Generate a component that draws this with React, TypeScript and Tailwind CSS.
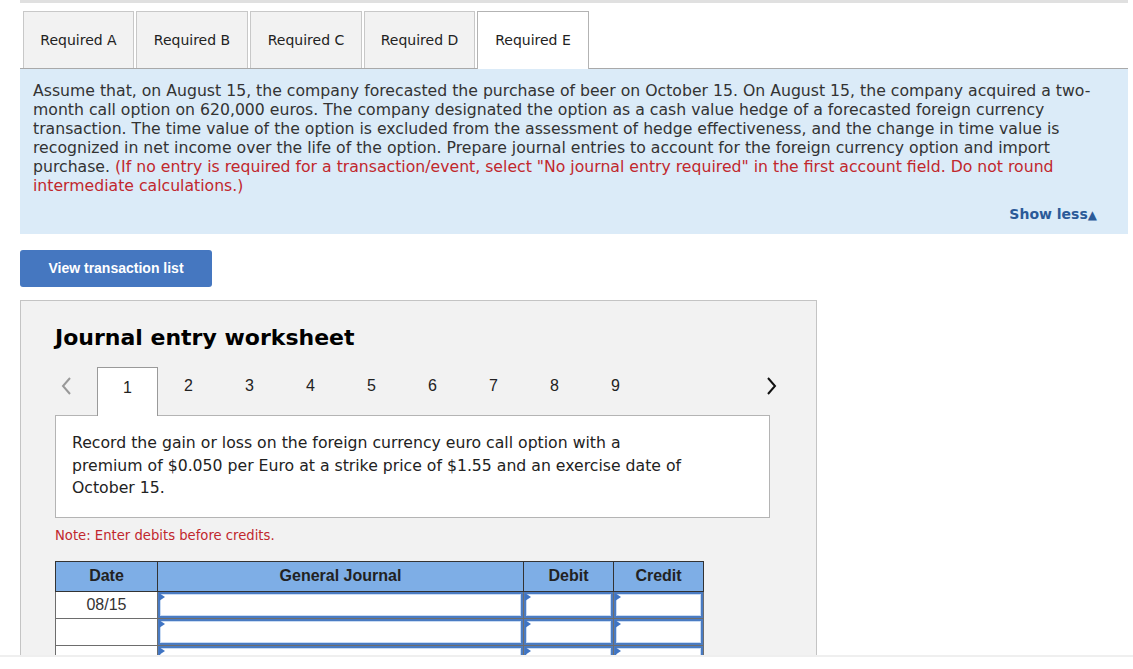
import React from "react";

const V = { fontFamily: '"DejaVu Sans", Verdana, sans-serif' };
const A = { fontFamily: '"Liberation Sans", Arial, sans-serif' };

function Tab({ label, active, w }: { label: string; active?: boolean; w: string }) {
  return (
    <div
      className={
        (active
          ? "h-[58px] bg-white border border-[#b3b3b3] border-b-0 relative z-10 -mb-px "
          : "h-[57px] bg-[#f2f2f2] border border-[#c8c8c8] border-b-0 ") +
        "flex items-center justify-center text-[14px] text-[#222] " +
        w
      }
      style={V}
    >
      {label}
    </div>
  );
}

function InputCell() {
  return (
    <td className="p-0 border border-[#6d6d6d]">
      <div className="h-[26px] bg-[#4a7bc2] p-[2px] relative">
        <div className="h-full bg-white border border-[#c9dbf3]"></div>
        <svg className="absolute left-[1px] top-[1px]" width="6" height="8" viewBox="0 0 6 8">
          <polygon points="0,0 6,4 0,8" fill="#3f74c3" />
        </svg>
      </div>
    </td>
  );
}

export default function App() {
  return (
    <div className="w-[1133px] h-[669px] bg-white overflow-hidden relative">
      <div className="pl-[20px] w-[1128px]">
        <div className="h-[3px] bg-[#e0e0e0]"></div>
        <div className="mt-[8px] flex items-end gap-[2px] pl-[3px] border-b border-[#a9a9a9] h-[58px]">
          <Tab label="Required A" w="w-[111px]" />
          <Tab label="Required B" w="w-[112px]" />
          <Tab label="Required C" w="w-[112px]" />
          <Tab label="Required D" w="w-[111px]" />
          <Tab label="Required E" w="w-[112px]" active />
        </div>
        <div className="bg-[#dbebf8] h-[165px] pl-[13px] pr-[31px] pt-[12px] relative">
          <p className="text-[15.7px] leading-[19px] text-[#333]" style={V}>
            Assume that, on August 15, the company forecasted the purchase of beer on October 15. On August 15, the company acquired a two-month call option on 620,000 euros. The company designated the option as a cash value hedge of a forecasted foreign currency transaction. The time value of the option is excluded from the assessment of hedge effectiveness, and the change in time value is recognized in net income over the life of the option. Prepare journal entries to account for the foreign currency option and import purchase.{" "}
            <span className="text-[#c1272d]">
              (If no entry is required for a transaction/event, select "No journal entry required" in the first account field. Do not round intermediate calculations.)
            </span>
          </p>
          <div className="absolute right-[31px] top-[135px] text-[14px] font-bold text-[#2b5a98]" style={V}>
            Show less<span className="text-[12px]">▲</span>
          </div>
        </div>

        <button
          className="mt-[16px] w-[192px] h-[37px] bg-[#4577c0] rounded-[3px] text-white text-[14px] font-bold"
          style={A}
        >
          View transaction list
        </button>

        <div className="mt-[13px] w-[797px] h-[400px] bg-[#f2f2f2] border border-[#c4c4c4] pl-[34px]">
          <h2 className="mt-[20px] text-[22px] font-bold text-black" style={V}>
            Journal entry worksheet
          </h2>
          <div className="mt-[12px] flex items-end h-[49px] relative">
            <div className="w-[42px] h-[49px] flex items-center justify-start pl-[6px] pb-[9px]">
              <svg width="12" height="20" viewBox="0 0 12 20">
                <polyline points="9,2 2,10 9,18" fill="none" stroke="#999" strokeWidth="2" />
              </svg>
            </div>
            <div className="w-[61px] h-[49px] bg-white border border-[#9a9a9a] border-b-0 flex items-center justify-center pb-[9px] text-[16px] text-[#222] relative z-10 -mb-px" style={A}>
              1
            </div>
            {["2", "3", "4", "5", "6", "7", "8", "9"].map((n) => (
              <div key={n} className="w-[61px] h-[49px] flex items-center justify-center pb-[9px] text-[16px] text-[#222]" style={A}>
                {n}
              </div>
            ))}
            <div className="absolute left-[710px] top-[0px] h-[49px] flex items-center pb-[9px]">
              <svg width="12" height="20" viewBox="0 0 12 20">
                <polyline points="3,2 10,10 3,18" fill="none" stroke="#111" strokeWidth="2" />
              </svg>
            </div>
          </div>
          <div className="w-[715px] h-[103px] bg-white border border-[#b4b4b4] pl-[16px] pt-[16px]">
            <p className="w-[620px] text-[15.7px] leading-[22.5px] text-[#222]" style={V}>
              Record the gain or loss on the foreign currency euro call option with a premium of $0.050 per Euro at a strike price of $1.55 and an exercise date of October 15.
            </p>
          </div>
          <p className="mt-[8px] text-[13.2px] text-[#c1272d]" style={V}>
            Note: Enter debits before credits.
          </p>
          <table className="mt-[15px] border-collapse" style={A}>
            <thead>
              <tr className="bg-[#7eaee6] h-[30px]">
                <th className="w-[102px] border border-[#333] text-[16px] font-bold text-[#222]">Date</th>
                <th className="w-[366px] border border-[#333] text-[16px] font-bold text-[#222]">General Journal</th>
                <th className="w-[90px] border border-[#333] text-[16px] font-bold text-[#222]">Debit</th>
                <th className="w-[90px] border border-[#333] text-[16px] font-bold text-[#222]">Credit</th>
              </tr>
            </thead>
            <tbody>
              {["08/15", "", ""].map((d, i) => (
                <tr key={i}>
                  <td className="bg-white border border-[#6d6d6d] text-center text-[16px] text-[#333] h-[26px]">{d}</td>
                  <InputCell />
                  <InputCell />
                  <InputCell />
                </tr>
              ))}
            </tbody>
          </table>
        </div>
      </div>
      <div className="absolute left-0 right-0 bottom-0 h-[14px] bg-white border-t-2 border-[#efefef]"></div>
    </div>
  );
}
